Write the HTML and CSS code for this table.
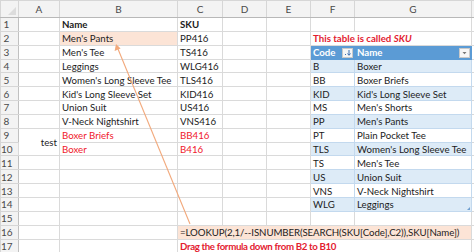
FILE: index.html
```html
<!DOCTYPE html>
<html lang="en">
<head>
    <meta charset="UTF-8">
    <title>SKU lookup</title>
    <link rel="stylesheet" href="styles.css">
</head>
<body>

    <div class="sheet">
        <table class="grid">
            <colgroup>
                <col class="col-rh">
                <col class="col-a">
                <col class="col-b">
                <col class="col-c">
                <col class="col-d">
                <col class="col-e">
                <col class="col-f">
                <col class="col-g">
                <col class="col-h">
            </colgroup>
            <thead>
                <tr class="heads">
                    <th class="corner"><span class="corner-mark"></span></th>
                    <th>A</th><th>B</th><th>C</th><th>D</th><th>E</th><th>F</th><th>G</th><th></th>
                </tr>
            </thead>
            <tbody>
                <tr>
                    <th>1</th><td></td><td class="bold">Name</td><td class="bold">SKU</td>
                    <td></td><td></td><td></td><td></td><td></td>
                </tr>
                <tr>
                    <th>2</th><td></td><td class="peach">Men's Pants</td><td>PP416</td>
                    <td></td><td></td><td colspan="2" class="note">This table is called <i>SKU</i></td><td></td>
                </tr>
                <tr>
                    <th>3</th><td></td><td>Men's Tee</td><td>TS416</td><td></td><td></td>
                    <td class="t-head">Code
                        <span class="filter-btn">
                            <svg width="9" height="8" viewBox="0 0 9 8"><path d="M6 1v5M4.5 4.5 6 6.3 7.5 4.5" fill="none" stroke="#3d6fb0" stroke-width="1"/><rect x="2" y="5" width="1" height="1" fill="#3d6fb0"/></svg>
                        </span>
                    </td>
                    <td class="t-head">Name
                        <span class="filter-btn">
                            <svg width="9" height="8" viewBox="0 0 9 8"><path d="M2.5 3h4L4.5 5.2z" fill="#777"/></svg>
                        </span>
                    </td>
                    <td></td>
                </tr>
                <tr>
                    <th>4</th><td></td><td>Leggings</td><td>WLG416</td><td></td><td></td>
                    <td class="band">B</td><td class="band">Boxer</td><td></td>
                </tr>
                <tr>
                    <th>5</th><td></td><td>Women's Long Sleeve Tee</td><td>TLS416</td><td></td><td></td>
                    <td class="plain">BB</td><td class="plain">Boxer Briefs</td><td></td>
                </tr>
                <tr>
                    <th>6</th><td></td><td>Kid's Long Sleeve Set</td><td>KID416</td><td></td><td></td>
                    <td class="band">KID</td><td class="band">Kid's Long Sleeve Set</td><td></td>
                </tr>
                <tr>
                    <th>7</th><td></td><td>Union Suit</td><td>US416</td><td></td><td></td>
                    <td class="plain">MS</td><td class="plain">Men's Shorts</td><td></td>
                </tr>
                <tr>
                    <th>8</th><td></td><td>V-Neck Nightshirt</td><td>VNS416</td><td></td><td></td>
                    <td class="band">PP</td><td class="band">Men's Pants</td><td></td>
                </tr>
                <tr>
                    <th>9</th><td rowspan="2" class="right">test</td><td class="red">Boxer Briefs</td><td class="red">BB416</td><td></td><td></td>
                    <td class="plain">PT</td><td class="plain">Plain Pocket Tee</td><td></td>
                </tr>
                <tr>
                    <th>10</th><td class="red">Boxer</td><td class="red">B416</td><td></td><td></td>
                    <td class="band">TLS</td><td class="band">Women's Long Sleeve Tee</td><td></td>
                </tr>
                <tr>
                    <th>11</th><td></td><td></td><td></td><td></td><td></td>
                    <td class="plain">TS</td><td class="plain">Men's Tee</td><td></td>
                </tr>
                <tr>
                    <th>12</th><td></td><td></td><td></td><td></td><td></td>
                    <td class="band">US</td><td class="band">Union Suit</td><td></td>
                </tr>
                <tr>
                    <th>13</th><td></td><td></td><td></td><td></td><td></td>
                    <td class="plain">VNS</td><td class="plain">V-Neck Nightshirt</td><td></td>
                </tr>
                <tr>
                    <th>14</th><td></td><td></td><td></td><td></td><td></td>
                    <td class="band">WLG</td><td class="band last">Leggings<span class="resize"></span></td><td></td>
                </tr>
                <tr>
                    <th>15</th><td></td><td></td><td></td><td></td><td></td><td></td><td></td><td></td>
                </tr>
                <tr>
                    <th>16</th><td></td><td></td>
                    <td colspan="5" class="peach formula">=LOOKUP(2,1/--ISNUMBER(SEARCH(SKU[Code],C2)),SKU[Name])</td><td></td>
                </tr>
                <tr>
                    <th>17</th><td></td><td></td>
                    <td colspan="5" class="note drag">Drag the formula down from B2 to B10</td><td></td>
                </tr>
            </tbody>
        </table>

        <!-- callout arrow from the formula to B2 -->
        <svg class="arrow" width="474" height="252" viewBox="0 0 474 252">
            <line x1="190" y1="224" x2="118" y2="49" stroke="#f2a97c" stroke-width="1.1"/>
            <path d="M116 44 L114.6 51 L120.6 48.6 Z" fill="#f2a97c"/>
        </svg>
    </div>

</body>
</html>
```

FILE: styles.css
```css
body {
    margin: 0;
    padding: 0;
    background-color: #fff;
    font-family: 'Lato', 'Liberation Sans', sans-serif;
    font-size: 9.7px;
    color: #1c1c1c;
}

.sheet {
    position: relative;
    width: 474px;
    height: 252px;
    overflow: hidden;
}

.grid {
    table-layout: fixed;
    border-collapse: collapse;
    width: 474px;
}

.col-rh { width: 18px; }
.col-a { width: 41px; }
.col-b { width: 118px; }
.col-c { width: 45px; }
.col-d { width: 44px; }
.col-e { width: 44px; }
.col-f { width: 44px; }
.col-g { width: 117px; }
.col-h { width: 3px; }

.grid td,
.grid th {
    border: 1px solid #dadada;
    padding: 0 0 0 2px;
    white-space: nowrap;
    overflow: visible;
    text-align: left;
    vertical-align: middle;
    line-height: 12px;
}

.grid tbody tr {
    height: 13.85px;
}

/* column and row headers */
.heads {
    height: 17px;
}

.heads th {
    background-color: #f3f3f3;
    color: #4a4a4a;
    font-size: 10px;
    font-weight: normal;
    text-align: center;
    padding: 0;
    border-color: #d6d6d6;
    border-bottom-color: #b8b8b8;
}

.grid tbody th {
    background-color: #f3f3f3;
    color: #4a4a4a;
    font-size: 10px;
    font-weight: normal;
    text-align: center;
    padding: 0 6px 0 0;
    border-color: #d6d6d6;
    border-right-color: #c0c0c0;
}

.corner {
    position: relative;
}

.corner-mark {
    position: absolute;
    right: 2px;
    bottom: 2px;
    width: 0;
    height: 0;
    border-left: 8px solid transparent;
    border-bottom: 8px solid #dcdcdc;
}

.bold {
    font-weight: bold;
}

.peach {
    background-color: #fce4d6;
}

.formula {
    letter-spacing: -0.1px;
}

.red {
    color: #f0202c;
}

.right {
    text-align: right !important;
    padding-right: 2px !important;
}

.note {
    color: #e3202f;
    font-weight: bold;
}

.drag {
    letter-spacing: -0.35px;
}

/* the SKU table */
.t-head {
    position: relative;
    background-color: #5b9bd5;
    color: #fff;
    font-weight: bold;
    border-color: #5b9bd5 !important;
}

.filter-btn {
    position: absolute;
    right: 1px;
    top: 2px;
    width: 9px;
    height: 8px;
    background-color: #f6f6f6;
    border: 1px solid #c9c9c9;
    display: flex;
}

.band {
    background-color: #ddebf7;
    border-color: #c3d9ee !important;
}

.plain {
    background-color: #fff;
    border-color: #c3d9ee !important;
}

.last {
    position: relative;
}

.resize {
    position: absolute;
    right: 1px;
    bottom: 1px;
    width: 0;
    height: 0;
    border-left: 3px solid transparent;
    border-bottom: 3px solid #6f9fd0;
}

.arrow {
    position: absolute;
    left: 0;
    top: 0;
    pointer-events: none;
}
```
